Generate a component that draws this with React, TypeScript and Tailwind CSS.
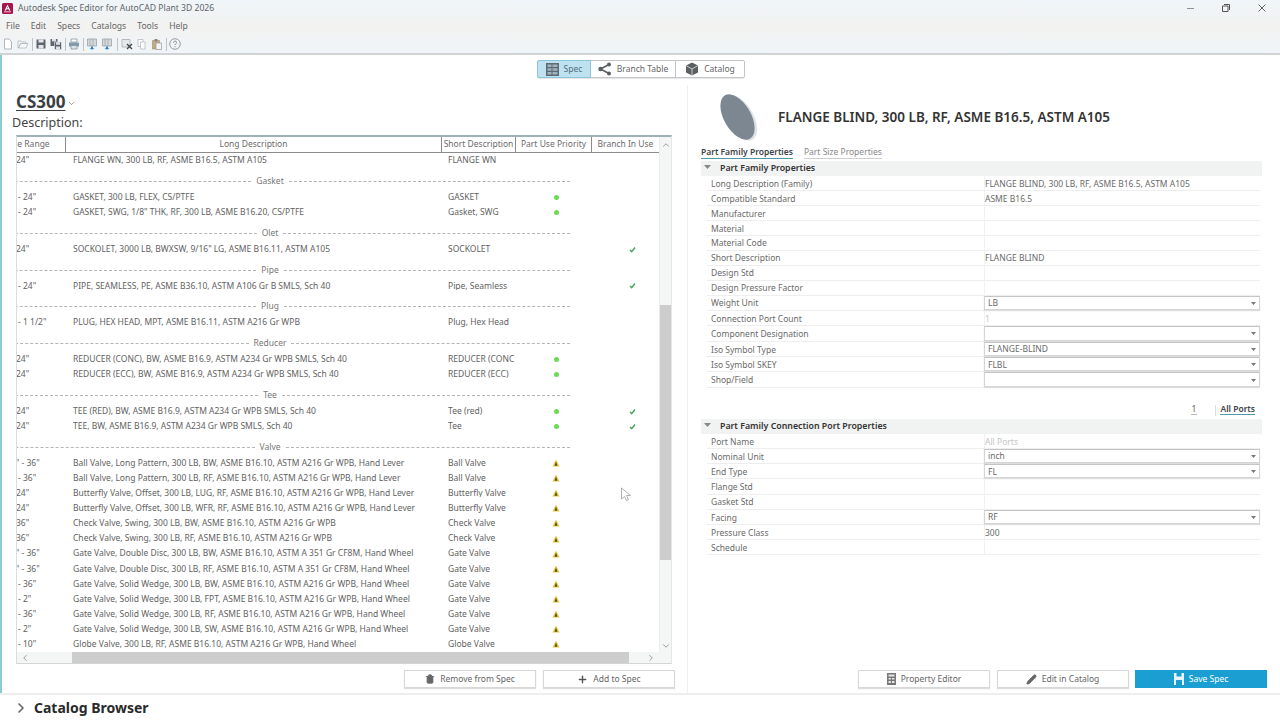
import React from "react";
import { ChevronUp, ChevronDown, ChevronLeft, ChevronRight, Trash2, Plus, Pencil } from "lucide-react";

type R = { g?: string; s?: string; clip?: boolean; l?: string; d?: string; p?: "dot" | "warn"; b?: boolean };

const rows: R[] = [
  { s: '24"', clip: true, l: "FLANGE WN, 300 LB, RF, ASME B16.5, ASTM A105", d: "FLANGE WN" },
  { g: "Gasket" },
  { s: '- 24"', l: "GASKET, 300 LB, FLEX, CS/PTFE", d: "GASKET", p: "dot" },
  { s: '- 24"', l: 'GASKET, SWG, 1/8" THK, RF, 300 LB, ASME B16.20, CS/PTFE', d: "Gasket, SWG", p: "dot" },
  { g: "Olet" },
  { s: '24"', clip: true, l: 'SOCKOLET, 3000 LB, BWXSW, 9/16" LG, ASME B16.11, ASTM A105', d: "SOCKOLET", b: true },
  { g: "Pipe" },
  { s: '- 24"', l: "PIPE, SEAMLESS, PE, ASME B36.10, ASTM A106 Gr B SMLS, Sch 40", d: "Pipe, Seamless", b: true },
  { g: "Plug" },
  { s: '- 1 1/2"', l: "PLUG, HEX HEAD, MPT, ASME B16.11, ASTM A216 Gr WPB", d: "Plug, Hex Head" },
  { g: "Reducer" },
  { s: '24"', clip: true, l: "REDUCER (CONC), BW, ASME B16.9, ASTM A234 Gr WPB SMLS, Sch 40", d: "REDUCER (CONC", p: "dot" },
  { s: '24"', clip: true, l: "REDUCER (ECC), BW, ASME B16.9, ASTM A234 Gr WPB SMLS, Sch 40", d: "REDUCER (ECC)", p: "dot" },
  { g: "Tee" },
  { s: '24"', clip: true, l: "TEE (RED), BW, ASME B16.9, ASTM A234 Gr WPB SMLS, Sch 40", d: "Tee (red)", p: "dot", b: true },
  { s: '24"', clip: true, l: "TEE, BW, ASME B16.9, ASTM A234 Gr WPB SMLS, Sch 40", d: "Tee", p: "dot", b: true },
  { g: "Valve" },
  { s: '2" - 36"', clip: true, l: "Ball Valve, Long Pattern, 300 LB, BW, ASME B16.10, ASTM A216 Gr WPB, Hand Lever", d: "Ball Valve", p: "warn" },
  { s: '- 36"', l: "Ball Valve, Long Pattern, 300 LB, RF, ASME B16.10, ASTM A216 Gr WPB, Hand Lever", d: "Ball Valve", p: "warn" },
  { s: '24"', clip: true, l: "Butterfly Valve, Offset, 300 LB, LUG, RF, ASME B16.10, ASTM A216 Gr WPB, Hand Lever", d: "Butterfly Valve", p: "warn" },
  { s: '24"', clip: true, l: "Butterfly Valve, Offset, 300 LB, WFR, RF, ASME B16.10, ASTM A216 Gr WPB, Hand Lever", d: "Butterfly Valve", p: "warn" },
  { s: '36"', clip: true, l: "Check Valve, Swing, 300 LB, BW, ASME B16.10, ASTM A216 Gr WPB", d: "Check Valve", p: "warn" },
  { s: '36"', clip: true, l: "Check Valve, Swing, 300 LB, RF, ASME B16.10, ASTM A216 Gr WPB", d: "Check Valve", p: "warn" },
  { s: '2" - 36"', clip: true, l: "Gate Valve, Double Disc, 300 LB, BW, ASME B16.10, ASTM A 351 Gr CF8M, Hand Wheel", d: "Gate Valve", p: "warn" },
  { s: '2" - 36"', clip: true, l: "Gate Valve, Double Disc, 300 LB, RF, ASME B16.10, ASTM A 351 Gr CF8M, Hand Wheel", d: "Gate Valve", p: "warn" },
  { s: '- 36"', l: "Gate Valve, Solid Wedge, 300 LB, BW, ASME B16.10, ASTM A216 Gr WPB, Hand Wheel", d: "Gate Valve", p: "warn" },
  { s: '- 2"', l: "Gate Valve, Solid Wedge, 300 LB, FPT, ASME B16.10, ASTM A216 Gr WPB, Hand Wheel", d: "Gate Valve", p: "warn" },
  { s: '- 36"', l: "Gate Valve, Solid Wedge, 300 LB, RF, ASME B16.10, ASTM A216 Gr WPB, Hand Wheel", d: "Gate Valve", p: "warn" },
  { s: '- 2"', l: "Gate Valve, Solid Wedge, 300 LB, SW, ASME B16.10, ASTM A216 Gr WPB, Hand Wheel", d: "Gate Valve", p: "warn" },
  { s: '- 10"', l: "Globe Valve, 300 LB, RF, ASME B16.10, ASTM A216 Gr WPB, Hand Wheel", d: "Globe Valve", p: "warn" },
];

function Warn() {
  return (
    <svg width="8" height="8" viewBox="0 0 8 8">
      <path d="M4 .5 7.6 7.5H.4Z" fill="#e8c93e" />
      <path d="M4 2.4 5.400 6.800H2.600Z" fill="#4f4822" />
    </svg>
  );
}
function Check() {
  return (
    <svg width="7" height="7" viewBox="0 0 7 7">
      <path d="M1 4 2.700 5.600 6 1.500" fill="none" stroke="#4aa85a" strokeWidth="1.500" />
    </svg>
  );
}

function TableRow({ r }: { r: R }) {
  if (r.g) {
    return (
      <div className="h-[21.67px] w-[600px] -ml-[47px] pt-[5px] flex items-center gap-[5px] text-[#777]">
        <div className="flex-1 border-t border-dashed border-[#b5b5b5]" />
        <span>{r.g}</span>
        <div className="flex-1 border-t border-dashed border-[#b5b5b5]" />
      </div>
    );
  }
  return (
    <div className="h-[15.15px] flex items-center text-[#626262] whitespace-nowrap">
      <div className="w-[56px] overflow-hidden shrink-0">
        <span className={r.clip ? (r.s!.length > 4 ? "block -ml-[6px]" : "block -ml-px") : "block ml-[1px]"}>{r.s}</span>
      </div>
      <div className="w-[375px] shrink-0">{r.l}</div>
      <div className="w-[74px] shrink-0 overflow-hidden">{r.d}</div>
      <div className="w-[68px] shrink-0 flex justify-center">
        {r.p === "dot" && <div className="w-[5px] h-[5px] rounded-full bg-[#6fd957]" />}
        {r.p === "warn" && <Warn />}
      </div>
      <div className="w-[69px] shrink-0 flex justify-center pl-[15px]">{r.b && <Check />}</div>
    </div>
  );
}

function Head({ w, children, b = true }: { w: string; children: React.ReactNode; b?: boolean }) {
  return (
    <div className={`${w} shrink-0 h-full flex items-center justify-center whitespace-nowrap overflow-hidden ${b ? "border-r border-[#8b8b8b]" : ""}`}>
      {children}
    </div>
  );
}

function Prop({ label, value, combo, dim, h = "h-[14.95px]" }: { label: string; value?: string; combo?: boolean; dim?: boolean; h?: string }) {
  return (
    <div className={`${h} ml-[6px] mr-[2px] grid grid-cols-[277px_1fr] border-b border-[#eeeeee] text-[#6a6a6a]`}>
      <div className="flex items-center pl-[4px] pt-[2px] whitespace-nowrap">{label}</div>
      {combo ? (
        <div className="flex items-center justify-between pl-[3px] pr-[3px] pt-[1px] border border-[#d5d5d5] border-t-[#c4c4c4] bg-white shadow-[0_1px_1px_#ddd]">
          <span>{value}</span>
          <svg width="5" height="3" viewBox="0 0 5 3"><path d="M0 0H5L2.500 3Z" fill="#777" /></svg>
        </div>
      ) : (
        <div className={`flex items-center pt-[2px] border-l border-[#f1f1f1] whitespace-nowrap ${dim ? "text-[#c4c4c4]" : ""}`}>{value}</div>
      )}
    </div>
  );
}

function GroupHead({ title }: { title: string }) {
  return (
    <div className="h-[15px] shrink-0 bg-[#f1f2f2] flex items-center font-semibold text-[#333] text-[8.800px]">
      <svg width="7" height="4" viewBox="0 0 7 4" className="ml-[3px] mr-[9px] -mt-[3px]"><path d="M0 0H7L3.500 4Z" fill="#888" /></svg>
      <span>{title}</span>
    </div>
  );
}

function Btn({ icon, label, primary }: { icon: React.ReactNode; label: string; primary?: boolean }) {
  return (
    <div className={`w-[132px] h-[18px] flex items-center justify-center gap-[5px] text-[8.500px] ${primary ? "bg-[#1b9ed2] text-white" : "bg-white text-[#666] border border-[#d8d8d8] shadow-[0_1px_1px_#ddd]"}`}>
      {icon}
      <span>{label}</span>
    </div>
  );
}

const T = ({ c, children }: { c?: string; children: React.ReactNode }) => (
  <div className={`w-[15px] h-[14px] flex items-center justify-center shrink-0 ${c || ""}`}>
    <svg width="12" height="12" viewBox="0 0 12 12">{children}</svg>
  </div>
);
const Sep = ({ w = "w-[3px]" }: { w?: string }) => (
  <div className={`${w} h-[13px] flex justify-center shrink-0`}><div className="w-px h-full bg-[#bcc4c8]" /></div>
);
const doc = <path d="M2.500 1h4.500l2.500 2.500V11h-7Z" fill="#fff" stroke="#b0b6ba" />;
const save = (
  <>
    <path d="M1.500 1.500h9v9h-9Z" fill="#5c666e" />
    <path d="M3.500 1.500h5v3h-5ZM3.500 7h5v3.500h-5Z" fill="#e3e6e8" />
  </>
);

function Toolbar() {
  return (
    <div className="h-[16px] flex items-center pl-[0.5px]">
      <T>{doc}</T>
      <T><path d="M1 3h3l1 1h4v1.500H3.500L1.500 10H1ZM3.500 5.500H11L9 10H1.500Z" fill="#f6f8f9" stroke="#b0b6ba" strokeWidth=".8" /></T>
      <Sep />
      <T>{save}</T>
      <T>
        <path d="M.5 1h7v7h-7Z" fill="#5c666e" /><path d="M2 1h4v2.400H2Z" fill="#dfe3e6" />
        <path d="M4.500 4h7v7.500h-7Z" fill="#5c666e" stroke="#eef2f5" strokeWidth=".6" /><path d="M6 4.300h4v2.500H6ZM6 8.600h4v2.600H6Z" fill="#dfe3e6" />
      </T>
      <Sep />
      <T>
        <path d="M3 1h6v3H3Z" fill="#fff" stroke="#8c979e" strokeWidth=".8" />
        <path d="M1 4.500h10v4H1Z" fill="#7f98aa" />
        <path d="M3 7.500h6V11H3Z" fill="#d8e2e8" stroke="#8c979e" strokeWidth=".8" />
      </T>
      <Sep />
      <T>
        <path d="M1.500 1h9v7h-9Z" fill="#d5d9dc" stroke="#9aa3a8" strokeWidth=".8" /><path d="M4 1v7M7 1v7" stroke="#9aa3a8" strokeWidth=".7" />
        <path d="M5 8.500h2V10h1.500L6 11.800 3.500 10H5Z" fill="#2f86c4" />
      </T>
      <T>
        <path d="M1.500 1h9v7h-9Z" fill="#d5d9dc" stroke="#9aa3a8" strokeWidth=".8" /><path d="M4 1v7M7 1v7" stroke="#9aa3a8" strokeWidth=".7" />
        <path d="M5 8.500h2V10h1.500L6 11.800 3.500 10H5Z" fill="#2f86c4" />
      </T>
      <Sep w="w-[5px]" />
      <T>
        <path d="M1 1.500h8v7.500H1Z" fill="#e6e9eb" stroke="#a5adb2" strokeWidth=".8" />
        <path d="M6 6l5 5M11 6l-5 5" stroke="#444" strokeWidth="1.300" />
      </T>
      <T><path d="M2 1.500h5v7H2Z" fill="#fff" stroke="#b5babd" strokeWidth=".8" /><path d="M4.500 4h4.500v7H4.500Z" fill="#fff" stroke="#b5babd" strokeWidth=".8" /></T>
      <T>
        <path d="M1.500 2.500h7V11h-7Z" fill="#c2ac85" stroke="#9d8a68" strokeWidth=".6" /><path d="M3.500 1h3v2.500h-3Z" fill="#888" />
        <path d="M5 5h5.500v6.500H5Z" fill="#f4f4f4" stroke="#999" strokeWidth=".7" />
      </T>
      <Sep />
      <T><circle cx="6" cy="6" r="5.300" fill="none" stroke="#8b9297" strokeWidth=".9" /><path d="M4.500 4.700c0-2 3-2 3-.2 0 1.200-1.500 1.200-1.500 2.500M6 8.200v1" fill="none" stroke="#70787d" strokeWidth=".9" /></T>
    </div>
  );
}

export default function App() {
  return (
    <div className="relative w-[1280px] h-[720px] overflow-hidden bg-white flex flex-col font-['Noto_Sans','Open_Sans',sans-serif] text-[8.500px] leading-none">
      <div className="h-[55px] shrink-0 border-b-2 border-[#cfd3d4] bg-linear-to-b from-[#eff5f9] via-[#f2f2f0] to-[#f0f5f9]">
        <div className="h-[16px] flex items-center pl-[2px] text-[#5e6468] text-[8.600px]">
          <svg width="11" height="11" viewBox="0 0 11 11" className="shrink-0">
            <rect width="11" height="11" rx="1.500" fill="#a5174a" />
            <rect x="2" y="8.300" width="7" height="1" fill="#f4b6c8" />
            <path d="M2.600 7.500 5.500 1.500 8.400 7.500H7L6.500 6.300h-2L4 7.500ZM4.900 5.200h1.200L5.500 3.800Z" fill="#fff" />
          </svg>
          <span className="ml-[5px] whitespace-nowrap">Autodesk Spec Editor for AutoCAD Plant 3D 2026</span>
          <div className="ml-auto flex items-center">
            <div className="w-[36px] flex justify-center"><div className="w-[7px] h-px bg-[#8b9094]" /></div>
            <div className="w-[36px] flex justify-center">
              <svg width="8" height="8" viewBox="0 0 8 8"><path d="M2 .5h5.500V6M.5 2h5.500v5.500H.5Z" fill="none" stroke="#555" strokeWidth="1" /></svg>
            </div>
            <div className="w-[36px] flex justify-center">
              <svg width="8" height="8" viewBox="0 0 8 8"><path d="M.5.5l7 7M7.500.5l-7 7" stroke="#555" strokeWidth=".9" /></svg>
            </div>
          </div>
        </div>
        <div className="h-[20px] flex items-center pl-[6px] gap-[11px] text-[#666] text-[8.600px]">
          <span>File</span><span>Edit</span><span>Specs</span><span>Catalogs</span><span>Tools</span><span>Help</span>
        </div>
        <Toolbar />
      </div>

      <div className="flex-1 min-h-0 flex flex-col border-l-2 border-[#8ccbd0]">
        <div className="h-[30px] shrink-0 pt-[5px] flex justify-center">
          <div className="h-[18px] w-[208px] flex rounded-[2px] border border-[#c2c6c8] text-[#666] text-[8.500px] shadow-[0_1px_1px_#e5e5e5]">
            <div className="w-[54px] flex items-center justify-center gap-[5px] bg-[#bfe2f1] border border-[#8cc5dc] -m-px rounded-l-[2px] text-[#4f6d7d]">
              <svg width="13" height="13" viewBox="0 0 13 13">
                <rect width="13" height="13" fill="#5d6a73" />
                <path d="M1.500 1.500h4v2.500h-4ZM6.500 1.500h5v2.500h-5ZM1.500 5.300h4v2.500h-4ZM6.500 5.300h5v2.500h-5ZM1.500 9h4v2.500h-4ZM6.500 9h5v2.500h-5Z" fill="#9fb3be" />
              </svg>
              <span>Spec</span>
            </div>
            <div className="w-[86px] flex items-center justify-center gap-[5px] border-r border-[#c2c6c8] pl-[1px]">
              <svg width="14" height="14" viewBox="0 0 14 14">
                <path d="M2.500 7 11 2.500M2.500 7 11 11.500" stroke="#5c5f62" strokeWidth="1.500" />
                <circle cx="2.500" cy="7" r="2.200" fill="#5c5f62" /><circle cx="11" cy="2.500" r="2" fill="#5c5f62" /><circle cx="11" cy="11.500" r="2" fill="#5c5f62" />
              </svg>
              <span>Branch Table</span>
            </div>
            <div className="flex-1 flex items-center justify-center gap-[5px]">
              <svg width="14" height="14" viewBox="0 0 14 14">
                <path d="M7 .5 13 3.500v7L7 13.500 1 10.500v-7Z" fill="#5c5f62" />
                <path d="M7 7v6.500M1 3.500 7 7l6-3.500" stroke="#e5e7e8" strokeWidth=".8" fill="none" />
              </svg>
              <span>Catalog</span>
            </div>
          </div>
        </div>

        <div className="flex-1 min-h-0 flex">
          <div className="w-[678px] shrink-0 pl-[10px] pt-[6px] flex flex-col">
            <div className="h-[20px] flex items-center pl-[4px]">
              <span className="text-[17px] font-bold text-[#3a3f44] underline decoration-1 underline-offset-[2px]">CS300</span>
              <ChevronDown size={9} className="ml-[2px] mt-[4px] text-[#777]" />
            </div>
            <div className="h-[20px] mt-[2px] flex items-center text-[12.500px] text-[#444]">Description:</div>
            <div className="mt-[2px] ml-[4px] w-[656px] h-[529px] border-t-[2px] border-t-[#9fb0b6] border-l border-l-[#dcdcdc] border-b border-b-[#d5d5d5] border-r border-r-[#e6e6e6] flex flex-col overflow-hidden">
              <div className="h-[515px] flex min-h-0">
                <div className="w-[642px] overflow-hidden flex flex-col">
                  <div className="h-[16px] shrink-0 flex items-center border-b border-[#8b8b8b] text-[#6b6b6b]">
                    <Head w="w-[49px]"><span className="-ml-[15px]">e Range</span></Head>
                    <Head w="w-[376px]">Long Description</Head>
                    <Head w="w-[74px]">Short Description</Head>
                    <Head w="w-[76px]">Part Use Priority</Head>
                    <Head w="w-[67px]" b={false}>Branch In Use</Head>
                  </div>
                  {rows.map((r, i) => <TableRow key={i} r={r} />)}
                </div>
                <div className="w-[12px] shrink-0 bg-[#f4f5f5] flex flex-col items-center border-l border-[#ececec]">
                  <div className="h-[168px] w-full flex justify-center pt-[3px]"><ChevronUp size={10} className="text-[#8a8a8a]" /></div>
                  <div className="h-[255px] w-full bg-[#cdcdcd]" />
                  <div className="flex-1 w-full flex items-end justify-center pb-[1px]"><ChevronDown size={10} className="text-[#8a8a8a]" /></div>
                </div>
              </div>
              <div className="flex-1 flex items-stretch bg-[#f4f5f5]">
                <div className="w-[55px] flex items-center pl-[3px]"><ChevronLeft size={10} className="text-[#8a8a8a]" /></div>
                <div className="w-[557px] bg-[#cdcdcd]" />
                <div className="flex-1 flex items-center justify-end pr-[15px]"><ChevronRight size={10} className="text-[#8a8a8a]" /></div>
              </div>
            </div>
            <div className="mt-[6px] flex gap-[7px] justify-end pr-[5px]">
              <Btn icon={<Trash2 size={10} fill="#666" className="text-[#666]" />} label="Remove from Spec" />
              <Btn icon={<Plus size={11} strokeWidth={3} className="text-[#555]" />} label="Add to Spec" />
            </div>
          </div>

          <div className="flex-1 min-w-0 ml-[7px] pl-[13px] pr-[18px] pb-[5px] border-l border-[#f0f0f0] flex flex-col">
            <div className="h-[61px] shrink-0 flex items-center pt-[5px] pl-[15px]">
              <svg width="46" height="48" viewBox="0 0 46 48" className="shrink-0">
                <ellipse cx="24" cy="24" rx="13.500" ry="25" transform="rotate(-30 24 24)" fill="#dfe2e6" />
                <ellipse cx="21.500" cy="23" rx="13.500" ry="25" transform="rotate(-30 21.500 23)" fill="#7d8792" />
              </svg>
              <span className="ml-[16px] -mt-[1px] text-[13.500px] font-semibold text-[#333] whitespace-nowrap">FLANGE BLIND, 300 LB, RF, ASME B16.5, ASTM A105</span>
            </div>
            <div className="h-[15px] shrink-0 pt-[2px] flex items-start gap-[11px]">
              <span className="pb-[1px] border-b border-[#4b9aa8] font-semibold text-[#3c444a]">Part Family Properties</span>
              <span className="pb-[1px] border-b border-[#cfcfcf] text-[#888]">Part Size Properties</span>
            </div>
            <GroupHead title="Part Family Properties" />
            <Prop label="Long Description (Family)" value="FLANGE BLIND, 300 LB, RF, ASME B16.5, ASTM A105" />
            <Prop label="Compatible Standard" value="ASME B16.5" />
            <Prop label="Manufacturer" />
            <Prop label="Material" />
            <Prop label="Material Code" />
            <Prop label="Short Description" value="FLANGE BLIND" />
            <Prop label="Design Std" />
            <Prop label="Design Pressure Factor" />
            <Prop h="h-[15.400px]" label="Weight Unit" value="LB" combo />
            <Prop h="h-[15.400px]" label="Connection Port Count" value="1" dim />
            <Prop h="h-[15.400px]" label="Component Designation" combo />
            <Prop h="h-[15.400px]" label="Iso Symbol Type" value="FLANGE-BLIND" combo />
            <Prop h="h-[15.400px]" label="Iso Symbol SKEY" value="FLBL" combo />
            <Prop h="h-[15.400px]" label="Shop/Field" combo />
            <div className="h-[31px] shrink-0 flex items-start justify-end pt-[17px] pr-[7px]">
              <span className="border-b border-[#bbb] text-[#666] px-[1px] pb-[1px] mr-[10px]">1</span>
              <span className="border-l border-[#ddd] h-[11px] ml-[8px] mr-[4px]" />
              <span className="border-b border-[#4b9aa8] font-semibold text-[#3c444a] pb-[1px]">All Ports</span>
            </div>
            <GroupHead title="Part Family Connection Port Properties" />
            <Prop h="h-[15.200px]" label="Port Name" value="All Ports" dim />
            <Prop h="h-[15.200px]" label="Nominal Unit" value="inch" combo />
            <Prop h="h-[15.200px]" label="End Type" value="FL" combo />
            <Prop h="h-[15.200px]" label="Flange Std" />
            <Prop h="h-[15.200px]" label="Gasket Std" />
            <Prop h="h-[15.200px]" label="Facing" value="RF" combo />
            <Prop h="h-[15.200px]" label="Pressure Class" value="300" />
            <Prop h="h-[15.200px]" label="Schedule" />
            <div className="mt-auto flex gap-[6.500px] justify-end -mr-[5px]">
              <Btn icon={<svg width="9" height="12" viewBox="0 0 9 12"><rect width="9" height="12" fill="#777" /><path d="M1.500 1.500h6v2h-6ZM1.500 5h2.500v1.500H1.500ZM5 5h2.500v1.500H5ZM1.500 8h2.500v2H1.500ZM5 8h2.500v2H5Z" fill="#e5e5e5" /></svg>} label="Property Editor" />
              <Btn icon={<Pencil size={11} fill="#666" className="text-[#666]" />} label="Edit in Catalog" />
              <Btn primary icon={<svg width="10" height="12" viewBox="0 0 10 12"><path d="M0 0h10v12H0Z" fill="#e8f5fb" /><path d="M2.500 0h5v3.500h-5ZM2 7h6v5H2Z" fill="#1b9ed2" /></svg>} label="Save Spec" />
            </div>
          </div>
        </div>
      </div>

      <div className="h-[27px] shrink-0 border-t-2 border-[#eeeeee] flex items-center pl-[13px]">
        <ChevronRight size={16} strokeWidth={2.500} className="text-[#666]" />
        <span className="ml-[5px] text-[14px] font-bold text-[#2a2a2a]">Catalog Browser</span>
      </div>

      <svg width="11" height="15" viewBox="0 0 11 15" className="absolute left-[620px] top-[487px]">
        <path d="M1.500 1v11l3-2.500 2 4 2-1-2-4h4Z" fill="#fff" stroke="#9a9a9a" strokeWidth=".8" />
      </svg>
    </div>
  );
}
